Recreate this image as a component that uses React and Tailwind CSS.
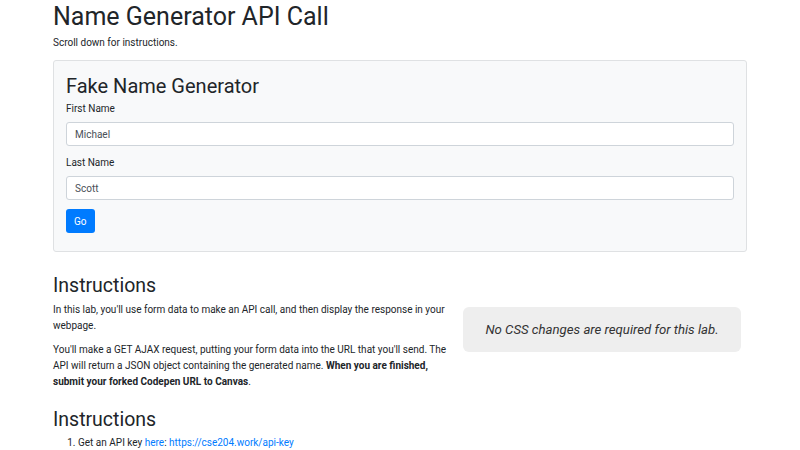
import React from "react";

const FONT = { fontFamily: 'Roboto, "Noto Sans", Arial, sans-serif' };

function Field({ label, value }) {
  return (
    <div className="mb-[9px]">
      <label className="block text-[10px] leading-[16px] text-[#212529] mb-[5px]">
        {label}
      </label>
      <div className="h-[24px] rounded-[3px] border border-[#ced4da] bg-white px-[8px] flex items-center text-[10px] text-[#495057]">
        {value}
      </div>
    </div>
  );
}

export default function App() {
  return (
    <div className="min-h-[450px] bg-white text-[#212529]" style={FONT}>
      <div className="mx-auto w-[694px]">
        {/* Header */}
        <h1 className="pt-[1px] text-[25px] leading-[32px] font-normal">
          Name Generator API Call
        </h1>
        <p className="mt-[2px] text-[10px] leading-[16px]">
          Scroll down for instructions.
        </p>

        {/* Form card */}
        <div className="mt-[9px] rounded-[3px] border border-[#dfe1e3] bg-[#f8f9fa] px-[12px] pt-[13px] pb-[18px]">
          <h2 className="text-[20px] leading-[24px] mb-[3px]">Fake Name Generator</h2>
          <Field label="First Name" value="Michael" />
          <Field label="Last Name" value="Scott" />
          <button className="block h-[24px] px-[8px] rounded-[3px] bg-[#007bff] text-white text-[10px]">
            Go
          </button>
        </div>

        {/* Instructions */}
        <h2 className="mt-[22px] text-[19.5px] leading-[24px]">Instructions</h2>
        <div className="mt-[4px] flex gap-[14px]">
          <div className="w-[396px] text-[10px] leading-[16px]">
            <p className="mb-[8px]">
              In this lab, you'll use form data to make an API call, and then display the response in
              your webpage.
            </p>
            <p>
              You'll make a GET AJAX request, putting your form data into the URL that you'll send. The
              API will return a JSON object containing the generated name.{" "}
              <strong className="font-bold">
                When you are finished, submit your forked Codepen URL to Canvas
              </strong>
              .
            </p>
          </div>
          <div className="mt-[5px] w-[278px] h-[45px] rounded-[6px] bg-[#eeeeee] flex items-center justify-center text-[13.2px] italic text-[#333]">
            No CSS changes are required for this lab.
          </div>
        </div>

        <h2 className="mt-[18px] text-[19.5px] leading-[24px]">Instructions</h2>
        <ol className="mt-[3px] pl-[25px] text-[10px] leading-[16px] list-decimal">
          <li>
            Get an API key <a className="text-[#007bff]">here</a>:{" "}
            <a className="text-[#007bff]">https://cse204.work/api-key</a>
          </li>
        </ol>
      </div>
    </div>
  );
}
